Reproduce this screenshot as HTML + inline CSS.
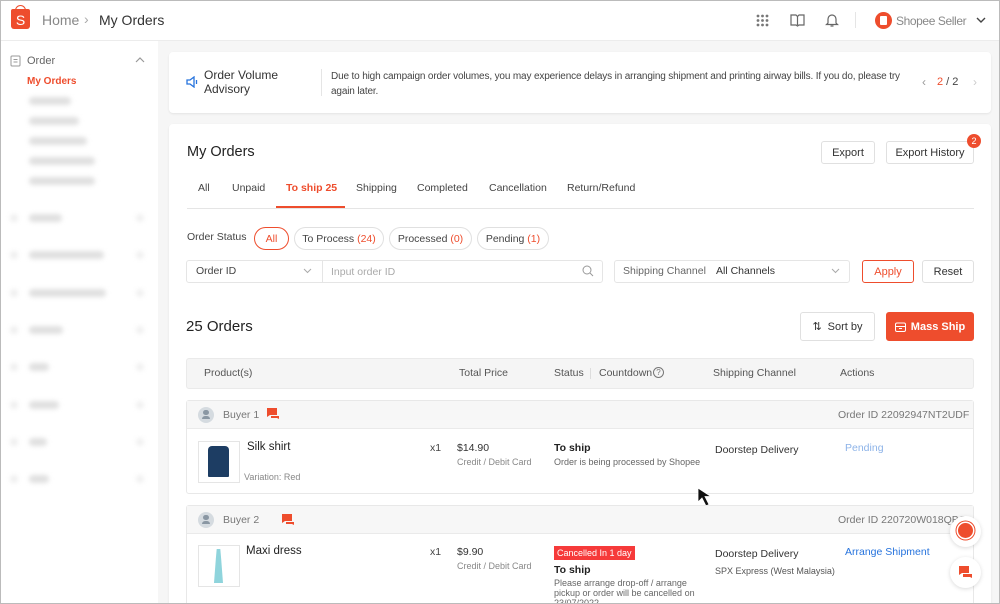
<!DOCTYPE html>
<html><head><meta charset="utf-8"><style>
*{box-sizing:border-box;margin:0;padding:0}
html,body{width:1000px;height:604px;overflow:hidden}
body{font-family:"Liberation Sans",Arial,sans-serif;background:#f6f6f6;position:relative;color:#333;font-size:11px}
.a{position:absolute}
.b{border:1px solid #e5e5e5;border-radius:3px;background:#fff}
.blur{background:#e0e0e0;filter:blur(2.5px);border-radius:4px}
.btn{position:absolute;border:1px solid #e0e0e0;border-radius:3px;background:#fff;font-size:11px;color:#333;display:flex;align-items:center;justify-content:center}
.pill{position:absolute;height:23px;border:1px solid #e0e0e0;border-radius:12px;background:#fff;font-size:10.5px;color:#444;display:flex;align-items:center;justify-content:center}
.r{color:#ee4d2d}
</style></head><body>
<div class="a" style="left:0;top:0;width:1000px;height:604px;border:1px solid #bbb;z-index:20;pointer-events:none"></div>
<!-- header -->
<div class="a" style="left:0;top:0;width:1000px;height:41px;background:#fff;border-bottom:1px solid #ececec"></div>
<div class="a" style="left:11px;top:9px;width:19px;height:20px;background:#ee4d2d;border-radius:2px 2px 3px 3px;color:#fff;font-size:14px;text-align:center;line-height:22px">S</div>
<div class="a" style="left:15px;top:5px;width:11px;height:7px;border:1.5px solid #ee4d2d;border-bottom:none;border-radius:6px 6px 0 0"></div>
<div class="a" style="left:42px;top:12px;font-size:14px;color:#888">Home</div>
<div class="a" style="left:84px;top:11px;font-size:14px;color:#aaa">›</div>
<div class="a" style="left:99px;top:12px;font-size:14px;color:#333">My Orders</div>
<svg class="a" style="left:756px;top:14px" width="13" height="13"><g fill="#777"><circle cx="2" cy="2" r="1.4"/><circle cx="6.5" cy="2" r="1.4"/><circle cx="11" cy="2" r="1.4"/><circle cx="2" cy="6.5" r="1.4"/><circle cx="6.5" cy="6.5" r="1.4"/><circle cx="11" cy="6.5" r="1.4"/><circle cx="2" cy="11" r="1.4"/><circle cx="6.5" cy="11" r="1.4"/><circle cx="11" cy="11" r="1.4"/></g></svg>
<svg class="a" style="left:790px;top:13px" width="15" height="14"><path d="M1 2h5l1.5 1.5L9 2h5v10H9l-1.5 1L6 12H1z M7.5 3.5V12" fill="none" stroke="#666" stroke-width="1.2"/></svg>
<svg class="a" style="left:825px;top:12px" width="14" height="16"><path d="M3 11V7a4 4 0 0 1 8 0v4l1.5 1.5h-11z M5.5 14h3" fill="none" stroke="#666" stroke-width="1.2"/></svg>
<div class="a" style="left:855px;top:12px;width:1px;height:16px;background:#e5e5e5"></div>
<div class="a" style="left:875px;top:12px;width:17px;height:17px;border-radius:50%;background:#ee4d2d"></div>
<div class="a" style="left:880px;top:16px;width:7px;height:9px;background:#fff;border-radius:1px"></div>
<div class="a" style="left:896px;top:14px;font-size:12px;color:#888;letter-spacing:-.4px">Shopee Seller</div>
<svg class="a" style="left:976px;top:17px" width="10" height="7"><path d="M1 1l4 4 4-4" fill="none" stroke="#444" stroke-width="1.4"/></svg>
<!-- sidebar -->
<div class="a" style="left:0;top:41px;width:158px;height:563px;background:#fff"></div>
<svg class="a" style="left:10px;top:55px" width="11" height="12"><rect x="1" y="1" width="9" height="10" rx="1" fill="none" stroke="#999"/><path d="M3.5 4.5h4M3.5 7h4" stroke="#999"/></svg>
<div class="a" style="left:27px;top:55px;font-size:11px;color:#666">Order</div>
<svg class="a" style="left:135px;top:57px" width="10" height="7"><path d="M1 5l4-4 4 4" fill="none" stroke="#999" stroke-width="1.2"/></svg>
<div class="a" style="left:27px;top:76px;font-size:10px;color:#ee4d2d;font-weight:bold">My Orders</div>
<div class="a blur" style="left:29px;top:97px;width:42px;height:8px"></div>
<div class="a blur" style="left:29px;top:117px;width:50px;height:8px"></div>
<div class="a blur" style="left:29px;top:137px;width:58px;height:8px"></div>
<div class="a blur" style="left:29px;top:157px;width:66px;height:8px"></div>
<div class="a blur" style="left:29px;top:177px;width:66px;height:8px"></div>
<div class="a blur" style="left:10px;top:214px;width:8px;height:8px;background:#eee"></div><div class="a blur" style="left:29px;top:214px;width:33px;height:8px"></div><div class="a blur" style="left:136px;top:214px;width:8px;height:8px;background:#f0f0f0"></div>
<div class="a blur" style="left:10px;top:251px;width:8px;height:8px;background:#eee"></div><div class="a blur" style="left:29px;top:251px;width:75px;height:8px"></div><div class="a blur" style="left:136px;top:251px;width:8px;height:8px;background:#f0f0f0"></div>
<div class="a blur" style="left:10px;top:289px;width:8px;height:8px;background:#eee"></div><div class="a blur" style="left:29px;top:289px;width:77px;height:8px"></div><div class="a blur" style="left:136px;top:289px;width:8px;height:8px;background:#f0f0f0"></div>
<div class="a blur" style="left:10px;top:326px;width:8px;height:8px;background:#eee"></div><div class="a blur" style="left:29px;top:326px;width:34px;height:8px"></div><div class="a blur" style="left:136px;top:326px;width:8px;height:8px;background:#f0f0f0"></div>
<div class="a blur" style="left:10px;top:363px;width:8px;height:8px;background:#eee"></div><div class="a blur" style="left:29px;top:363px;width:20px;height:8px"></div><div class="a blur" style="left:136px;top:363px;width:8px;height:8px;background:#f0f0f0"></div>
<div class="a blur" style="left:10px;top:401px;width:8px;height:8px;background:#eee"></div><div class="a blur" style="left:29px;top:401px;width:30px;height:8px"></div><div class="a blur" style="left:136px;top:401px;width:8px;height:8px;background:#f0f0f0"></div>
<div class="a blur" style="left:10px;top:438px;width:8px;height:8px;background:#eee"></div><div class="a blur" style="left:29px;top:438px;width:18px;height:8px"></div><div class="a blur" style="left:136px;top:438px;width:8px;height:8px;background:#f0f0f0"></div>
<div class="a blur" style="left:10px;top:475px;width:8px;height:8px;background:#eee"></div><div class="a blur" style="left:29px;top:475px;width:20px;height:8px"></div><div class="a blur" style="left:136px;top:475px;width:8px;height:8px;background:#f0f0f0"></div>
<!-- advisory -->
<div class="a" style="left:169px;top:52px;width:822px;height:61px;background:#fff;border-radius:4px;box-shadow:0 1px 2px rgba(0,0,0,.08)"></div>
<svg class="a" style="left:186px;top:76px" width="13" height="12"><path d="M1 4h3l4-3v10L4 8H1z M10.5 4v4" fill="none" stroke="#2673dd" stroke-width="1.3"/></svg>
<div class="a" style="left:204px;top:68px;font-size:12px;color:#333;line-height:14px">Order Volume<br>Advisory</div>
<div class="a" style="left:321px;top:69px;width:1px;height:27px;background:#e5e5e5"></div>
<div class="a" style="left:331px;top:69px;font-size:10px;letter-spacing:-.15px;color:#444;line-height:15px;white-space:nowrap">Due to high campaign order volumes, you may experience delays in arranging shipment and printing airway bills. If you do, please try<br>again later.</div>
<div class="a" style="left:922px;top:75px;font-size:12px;color:#999">‹</div>
<div class="a" style="left:937px;top:76px;font-size:11px;color:#444"><span class="r">2</span> / 2</div>
<div class="a" style="left:973px;top:75px;font-size:12px;color:#ccc">›</div>
<!-- main card -->
<div class="a" style="left:169px;top:124px;width:822px;height:480px;background:#fff;border-radius:4px 4px 0 0;box-shadow:0 1px 2px rgba(0,0,0,.08)"></div>
<div class="a" style="left:187px;top:144px;font-size:14.5px;color:#222">My Orders</div>
<div class="btn" style="left:821px;top:141px;width:54px;height:23px">Export</div>
<div class="btn" style="left:886px;top:141px;width:88px;height:23px">Export History</div>
<div class="a" style="left:967px;top:134px;width:14px;height:14px;border-radius:50%;background:#ee4d2d;color:#fff;font-size:9px;text-align:center;line-height:14px">2</div>
<div class="a" style="left:187px;top:208px;width:787px;height:1px;background:#e5e5e5"></div>
<div class="a" style="left:198px;top:182px;font-size:10.5px;color:#444">All</div>
<div class="a" style="left:232px;top:182px;font-size:10.5px;color:#444">Unpaid</div>
<div class="a" style="left:286px;top:182px;font-size:10.5px;color:#ee4d2d;font-weight:bold">To ship 25</div>
<div class="a" style="left:276px;top:206px;width:69px;height:2px;background:#ee4d2d"></div>
<div class="a" style="left:356px;top:182px;font-size:10.5px;color:#444">Shipping</div>
<div class="a" style="left:417px;top:182px;font-size:10.5px;color:#444">Completed</div>
<div class="a" style="left:489px;top:182px;font-size:10.5px;color:#444">Cancellation</div>
<div class="a" style="left:567px;top:182px;font-size:10.5px;color:#444">Return/Refund</div>
<div class="a" style="left:187px;top:231px;font-size:10.5px;color:#444">Order Status</div>
<div class="pill" style="left:254px;top:227px;width:35px;border-color:#ee4d2d;color:#ee4d2d">All</div>
<div class="pill" style="left:294px;top:227px;width:90px">To Process&nbsp;<span class="r">(24)</span></div>
<div class="pill" style="left:389px;top:227px;width:83px">Processed&nbsp;<span class="r">(0)</span></div>
<div class="pill" style="left:477px;top:227px;width:72px">Pending&nbsp;<span class="r">(1)</span></div>
<div class="a b" style="left:186px;top:260px;width:417px;height:23px"></div>
<div class="a" style="left:322px;top:260px;width:1px;height:23px;background:#e5e5e5"></div>
<div class="a" style="left:196px;top:265px;font-size:10.5px;color:#444">Order ID</div>
<svg class="a" style="left:303px;top:268px" width="9" height="6"><path d="M1 1l3.5 3.5L8 1" fill="none" stroke="#aaa"/></svg>
<div class="a" style="left:331px;top:266px;font-size:10.5px;color:#aaa">Input order ID</div>
<svg class="a" style="left:582px;top:265px" width="12" height="12"><circle cx="5" cy="5" r="4" fill="none" stroke="#999"/><path d="M8 8l3 3" stroke="#999"/></svg>
<div class="a b" style="left:614px;top:260px;width:236px;height:23px"></div>
<div class="a" style="left:623px;top:265px;font-size:10.5px;color:#666">Shipping Channel</div>
<div class="a" style="left:716px;top:265px;font-size:10.5px;color:#333">All Channels</div>
<svg class="a" style="left:831px;top:268px" width="9" height="6"><path d="M1 1l3.5 3.5L8 1" fill="none" stroke="#aaa"/></svg>
<div class="btn" style="left:862px;top:260px;width:52px;height:23px;border-color:#ee4d2d;color:#ee4d2d">Apply</div>
<div class="btn" style="left:922px;top:260px;width:52px;height:23px">Reset</div>
<div class="a" style="left:186px;top:318px;font-size:15px;color:#222">25 Orders</div>
<div class="btn" style="left:800px;top:312px;width:75px;height:29px"><span style="font-size:11px;margin-right:6px">⇅</span>Sort by</div>
<div class="btn" style="left:886px;top:312px;width:88px;height:29px;background:#ee4d2d;border-color:#ee4d2d;color:#fff;font-weight:bold"><svg width="11" height="10" style="margin-right:5px"><rect x=".5" y="1" width="10" height="8.5" rx="1.5" fill="none" stroke="#fff"/><path d="M.5 4.5h10M4 6.5h3" stroke="#fff"/></svg>Mass Ship</div>
<div class="a" style="left:186px;top:358px;width:788px;height:31px;background:#f5f5f5;border:1px solid #eaeaea;border-radius:3px"></div>
<div class="a" style="left:204px;top:367px;font-size:10.5px;color:#555">Product(s)</div>
<div class="a" style="left:459px;top:367px;font-size:10.5px;color:#555">Total Price</div>
<div class="a" style="left:554px;top:367px;font-size:10.5px;color:#555">Status</div>
<div class="a" style="left:590px;top:368px;width:1px;height:11px;background:#ddd"></div>
<div class="a" style="left:599px;top:367px;font-size:10.5px;color:#555">Countdown</div>
<div class="a" style="left:653px;top:367px;width:11px;height:11px;border:1px solid #777;border-radius:50%;font-size:8px;text-align:center;line-height:10px;color:#777">?</div>
<div class="a" style="left:713px;top:367px;font-size:10.5px;color:#555">Shipping Channel</div>
<div class="a" style="left:840px;top:367px;font-size:10.5px;color:#555">Actions</div>
<!-- order 1 -->
<div class="a" style="left:186px;top:400px;width:788px;height:94px;border:1px solid #e8e8e8;border-radius:3px;background:#fff"></div>
<div class="a" style="left:187px;top:401px;width:786px;height:28px;background:#f7f7f7;border-bottom:1px solid #eaeaea"></div>
<div class="a" style="left:198px;top:407px;width:16px;height:16px;border-radius:50%;background:#d5dbe0"></div>
<div class="a" style="left:203px;top:410px;width:6px;height:5px;border-radius:3px;background:#8a97a3"></div><div class="a" style="left:202px;top:416px;width:8px;height:3px;background:#8a97a3;border-radius:3px 3px 0 0"></div>
<div class="a" style="left:223px;top:409px;font-size:10.5px;color:#777">Buyer 1</div>
<svg class="a" style="left:267px;top:408px" width="13" height="12"><path d="M0 0h10v7H3l-3 2z" fill="#ee4d2d"/><path d="M4 8h8v3l-2-1H4z" fill="#ee4d2d"/></svg>
<div class="a" style="left:838px;top:409px;font-size:10.5px;color:#777">Order ID 22092947NT2UDF</div>
<div class="a" style="left:198px;top:441px;width:42px;height:42px;border:1px solid #e5e5e5;background:#fff"></div>
<div class="a" style="left:208px;top:446px;width:21px;height:31px;background:#1d3d63;border-radius:4px 4px 1px 1px"></div>
<div class="a" style="left:247px;top:441px;font-size:11.5px;color:#222">Silk shirt</div>
<div class="a" style="left:244px;top:472px;font-size:9px;color:#888">Variation: Red</div>
<div class="a" style="left:430px;top:442px;font-size:10.5px;color:#444">x1</div>
<div class="a" style="left:457px;top:442px;font-size:10.5px;color:#333">$14.90</div>
<div class="a" style="left:457px;top:457px;font-size:9px;color:#888">Credit / Debit Card</div>
<div class="a" style="left:554px;top:442px;font-size:10.5px;color:#222;font-weight:bold">To ship</div>
<div class="a" style="left:554px;top:457px;font-size:9px;color:#666">Order is being processed by Shopee</div>
<div class="a" style="left:715px;top:444px;font-size:10.5px;color:#333">Doorstep Delivery</div>
<div class="a" style="left:845px;top:442px;font-size:10.5px;color:#8db3e8">Pending</div>
<svg class="a" style="left:697px;top:487px" width="20" height="22"><path d="M1 1l0 14 4-4 4 8 3-1.5-4-8 6 0z" fill="#111" stroke="#fff" stroke-width=".8"/></svg>
<!-- order 2 -->
<div class="a" style="left:186px;top:505px;width:788px;height:99px;border:1px solid #e8e8e8;border-bottom:none;border-radius:3px 3px 0 0;background:#fff;overflow:hidden"></div>
<div class="a" style="left:187px;top:506px;width:786px;height:28px;background:#f7f7f7;border-bottom:1px solid #eaeaea"></div>
<div class="a" style="left:198px;top:512px;width:16px;height:16px;border-radius:50%;background:#d5dbe0"></div>
<div class="a" style="left:203px;top:515px;width:6px;height:5px;border-radius:3px;background:#8a97a3"></div><div class="a" style="left:202px;top:521px;width:8px;height:3px;background:#8a97a3;border-radius:3px 3px 0 0"></div>
<div class="a" style="left:223px;top:514px;font-size:10.5px;color:#777">Buyer 2</div>
<svg class="a" style="left:282px;top:514px" width="13" height="12"><path d="M0 0h10v7H3l-3 2z" fill="#ee4d2d"/><path d="M4 8h8v3l-2-1H4z" fill="#ee4d2d"/></svg>
<div class="a" style="left:838px;top:514px;font-size:10.5px;color:#777;white-space:nowrap">Order ID 220720W018QBC</div>
<div class="a" style="left:198px;top:545px;width:42px;height:42px;border:1px solid #e5e5e5;background:#fff"></div>
<div class="a" style="left:214px;top:549px;width:9px;height:34px;background:#8fd4dc;clip-path:polygon(30% 0,70% 0,80% 30%,100% 100%,0 100%,20% 30%)"></div>
<div class="a" style="left:246px;top:545px;font-size:11.5px;color:#222">Maxi dress</div>
<div class="a" style="left:430px;top:546px;font-size:10.5px;color:#444">x1</div>
<div class="a" style="left:457px;top:546px;font-size:10.5px;color:#333">$9.90</div>
<div class="a" style="left:457px;top:561px;font-size:9px;color:#888">Credit / Debit Card</div>
<div class="a" style="left:554px;top:546px;height:14px;padding:0 3px;background:#f63a3a;color:#fff;font-size:9px;line-height:14px">Cancelled In 1 day</div>
<div class="a" style="left:554px;top:564px;font-size:10.5px;color:#222;font-weight:bold">To ship</div>
<div class="a" style="left:554px;top:578px;font-size:9px;color:#666;line-height:10px">Please arrange drop-off / arrange<br>pickup or order will be cancelled on<br>23/07/2022</div>
<div class="a" style="left:715px;top:548px;font-size:10.5px;color:#333">Doorstep Delivery</div>
<div class="a" style="left:715px;top:566px;font-size:9px;color:#555">SPX Express (West Malaysia)</div>
<div class="a" style="left:845px;top:546px;font-size:10.5px;color:#2673dd">Arrange Shipment</div>
<div class="a" style="left:950px;top:516px;width:31px;height:31px;border-radius:50%;background:#fff;box-shadow:0 1px 4px rgba(0,0,0,.15)"></div>
<div class="a" style="left:958px;top:523px;width:15px;height:15px;border-radius:50%;background:#ee4d2d;box-shadow:0 0 0 1.5px #fff,0 0 0 2.5px #ee4d2d"></div>
<div class="a" style="left:950px;top:557px;width:31px;height:31px;border-radius:50%;background:#fff;box-shadow:0 1px 4px rgba(0,0,0,.15)"></div>
<svg class="a" style="left:959px;top:566px" width="14" height="13"><path d="M0 0h10v7H3l-3 2z" fill="#ee4d2d"/><path d="M4 8h9v4l-2-1H4z" fill="#ee4d2d"/></svg>
</body></html>
